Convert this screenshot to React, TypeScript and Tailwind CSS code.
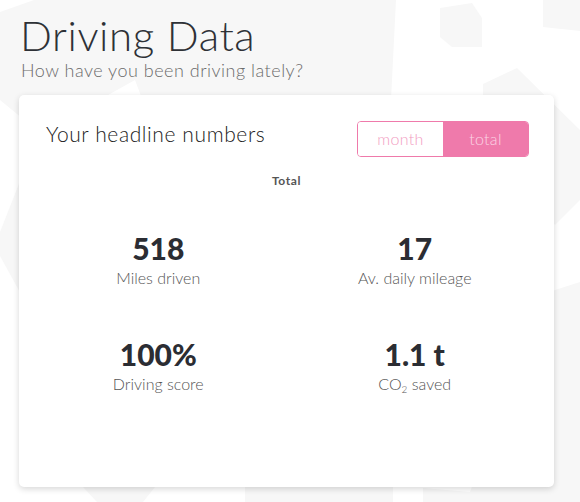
import React from "react";

const stats = [
  { value: "518", label: "Miles driven" },
  { value: "17", label: "Av. daily mileage" },
  { value: "100%", label: "Driving score" },
  { value: "1.1 t", label: "CO2 saved" },
];

// faint polygons behind the page
const Backdrop = () => (
  <svg className="absolute inset-0" width="580" height="502" viewBox="0 0 580 502">
    <g fill="#f7f7f7">
      <polygon points="34,0 396,0 390,120 150,120 135,80 40,133 0,100 0,12" />
      <polygon points="0,232 22,176 40,250 22,296 0,256" />
      <polygon points="440,8 472,3 482,18 482,47 452,47 440,37" />
      <polygon points="543,0 580,0 580,31 543,27" />
      <polygon points="483,84 517,68 580,130 580,200 555,225 483,120" />
      <polygon points="555,290 580,282 580,502 423,502 423,488 470,492 540,300" />
      <polygon points="83,487 155,487 143,502 97,502" />
      <polygon points="245,487 393,487 393,502 245,502" />
    </g>
  </svg>
);

export default function App() {
  return (
    <div
      className="relative w-[580px] h-[502px] overflow-hidden bg-white"
      style={{ fontFamily: "Lato, 'Open Sans', sans-serif" }}
    >
      <Backdrop />
      <div className="relative px-[20px] pt-[11px]">
        <h1 className="text-[42px] leading-[48px] font-light text-[#2e3136] tracking-[0.6px]">
          Driving Data
        </h1>
        <p className="text-[18px] leading-[22px] font-light text-[#6b6b6b] tracking-[0.5px] ml-[1px]">
          How have you been driving lately?
        </p>

        <div className="mt-[14px] -ml-[1px] w-[535px] h-[392px] bg-white rounded-[5px] shadow-[0_2px_6px_rgba(0,0,0,0.16)]">
          <div className="flex items-start justify-between pl-[27px] pr-[25px] pt-[26px]">
            <h2 className="text-[21px] leading-[26px] font-light text-[#222] tracking-[0.6px]">
              Your headline numbers
            </h2>
            <div className="flex h-[36px] w-[172px] rounded-[4px] border border-[#ef7aab] overflow-hidden">
              <button className="w-[85px] bg-white text-[16px] font-light text-[#f29cc1] tracking-[0.3px]">
                month
              </button>
              <button className="flex-1 bg-[#ef7aab] text-[16px] font-light text-[#fbd5e5] tracking-[0.3px]">
                total
              </button>
            </div>
          </div>

          <p className="text-center text-[12px] font-bold text-[#555] tracking-[0.6px] mt-[15px]">
            Total
          </p>

          <div className="grid grid-cols-2 px-[11px] mt-[42px] gap-y-[50px]">
            {stats.map((s) => (
              <div key={s.label} className="flex flex-col items-center">
                <span className="text-[30px] leading-[33px] font-black text-[#2b2d33]">
                  {s.value}
                </span>
                <span className="text-[16px] leading-[20px] font-light text-[#555] mt-[3px]">
                  {s.label === "CO2 saved" ? (
                    <>
                      CO<sub className="text-[10px]">2</sub> saved
                    </>
                  ) : (
                    s.label
                  )}
                </span>
              </div>
            ))}
          </div>
        </div>
      </div>
    </div>
  );
}
